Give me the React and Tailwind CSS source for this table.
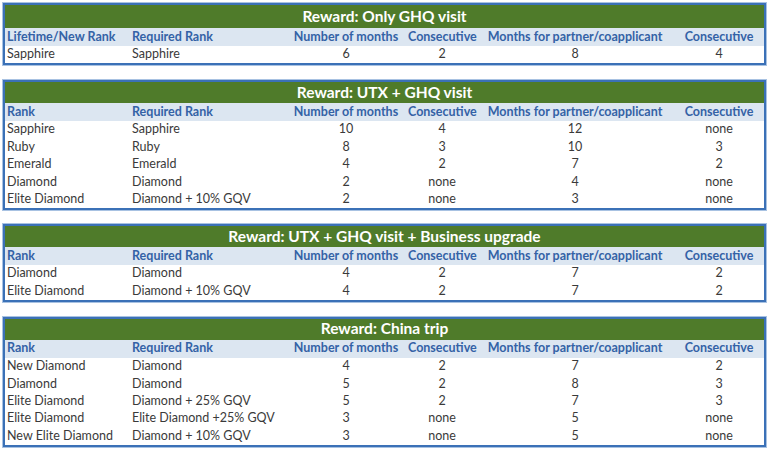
const tables = [
  {
    title: 'Reward: Only GHQ visit',
    first: 'Lifetime/New Rank',
    titleH: 'h-[23px]',
    gap: 'mt-0',
    rows: [['Sapphire', 'Sapphire', '6', '2', '8', '4']],
  },
  {
    title: 'Reward: UTX + GHQ visit',
    first: 'Rank',
    titleH: 'h-[21px]',
    gap: 'mt-[14.6px]',
    rows: [
      ['Sapphire', 'Sapphire', '10', '4', '12', 'none'],
      ['Ruby', 'Ruby', '8', '3', '10', '3'],
      ['Emerald', 'Emerald', '4', '2', '7', '2'],
      ['Diamond', 'Diamond', '2', 'none', '4', 'none'],
      ['Elite Diamond', 'Diamond + 10% GQV', '2', 'none', '3', 'none'],
    ],
  },
  {
    title: 'Reward: UTX + GHQ visit + Business upgrade',
    first: 'Rank',
    titleH: 'h-[21px]',
    gap: 'mt-[14px]',
    rows: [
      ['Diamond', 'Diamond', '4', '2', '7', '2'],
      ['Elite Diamond', 'Diamond + 10% GQV', '4', '2', '7', '2'],
    ],
  },
  {
    title: 'Reward: China trip',
    first: 'Rank',
    titleH: 'h-[21px]',
    gap: 'mt-[15px]',
    rows: [
      ['New Diamond', 'Diamond', '4', '2', '7', '2'],
      ['Diamond', 'Diamond', '5', '2', '8', '3'],
      ['Elite Diamond', 'Diamond + 25% GQV', '5', '2', '7', '3'],
      ['Elite Diamond', 'Elite Diamond +25% GQV', '3', 'none', '5', 'none'],
      ['New Elite Diamond', 'Diamond + 10% GQV', '3', 'none', '5', 'none'],
    ],
  },
];

const grid = 'grid grid-cols-[125px_154px_124px_68px_198px_1fr]';

function RewardTable({ title, first, rows, titleH, gap }) {
  const head = [first, 'Required Rank', 'Number of months', 'Consecutive', 'Months for partner/coapplicant', 'Consecutive'];
  return (
    <div className={`${gap} border-2 border-[#3b71b7] shadow-[0_0_0_1px_#a8c2e2] bg-white`}>
      <div className={`${titleH} bg-[#4f7b2a] flex items-center justify-center text-white font-bold text-[15.5px] leading-none`}>
        {title}
      </div>
      <div className={`${grid} h-[18px] bg-[#dce6f1] items-center text-[12.5px] font-bold text-[#3462a6] leading-none`}>
        {head.map((h, i) => (
          <div key={i} className={i < 2 ? 'pl-[2px] whitespace-nowrap' : 'text-center whitespace-nowrap'}>{h}</div>
        ))}
      </div>
      {rows.map((r, ri) => (
        <div key={ri} className={`${grid} h-[17.4px] items-center text-[12.5px] text-[#3a3a3a] leading-none`}>
          {r.map((c, i) => (
            <div key={i} className={i < 2 ? 'pl-[2px] whitespace-nowrap' : 'text-center whitespace-nowrap'}>{c}</div>
          ))}
        </div>
      ))}
    </div>
  );
}

export default function App() {
  return (
    <div className="w-[768px] h-[451px] bg-white pt-[3px] pl-[3px] pr-[2px] flex flex-col font-['Lato',sans-serif] overflow-hidden">
      {tables.map((t, i) => (
        <RewardTable key={i} {...t} />
      ))}
    </div>
  );
}
